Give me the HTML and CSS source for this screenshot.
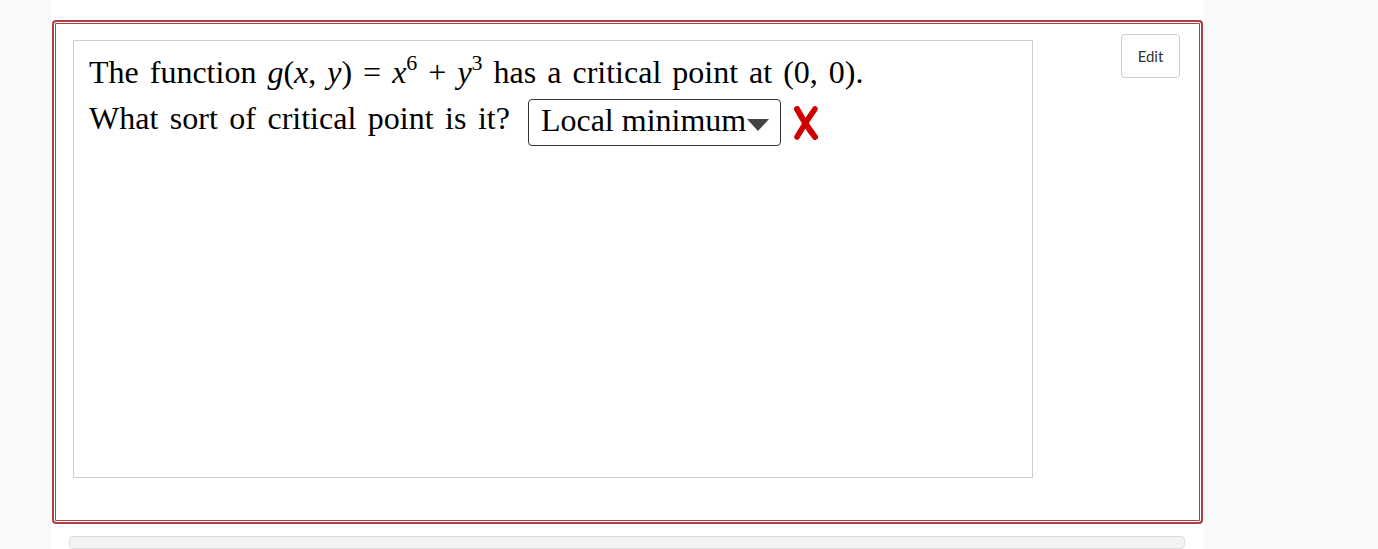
FILE: index.html
```html
<!DOCTYPE html>
<html>
<head>
<meta charset="utf-8">
<link rel="stylesheet" href="styles.css">
</head>
<body>
<div class="page">
  <div class="problem">
    <div class="content">
      <p class="line1">The function <span class="math"><i>g</i>(<i>x</i>, <i>y</i>) = <i>x</i><sup>6</sup> + <i>y</i><sup>3</sup></span> has a critical point at <span class="math">(0, 0)</span>.</p>
      <p class="line2"><span class="q">What sort of critical point is it?</span><span class="select"><span class="opt">Local minimum</span><svg class="caret" width="22" height="12" viewBox="0 0 22 12"><polygon points="0,0 22,0 11,12" fill="#444"/></svg></span><svg class="wrong" width="26" height="34" viewBox="0 0 26 34"><path d="M4 3 C9 12, 15 22, 22 31" stroke="#d00000" stroke-width="6" fill="none" stroke-linecap="round"/><path d="M22 3 C16 11, 10 21, 4 31" stroke="#d00000" stroke-width="5.5" fill="none" stroke-linecap="round"/></svg></p>
    </div>
    <button class="edit">Edit</button>
  </div>
  <div class="next"></div>
</div>
</body>
</html>
```
FILE: styles.css
```css
html, body {
  margin: 0;
  padding: 0;
  background: #f9f9f9;
}
.page {
  margin-left: 51px;
  width: 1153px;
  height: 549px;
  background: #fff;
  padding-top: 20px;
  box-sizing: border-box;
  overflow: hidden;
}
.problem {
  margin-left: 1px;
  width: 1151px;
  height: 504px;
  box-sizing: border-box;
  border: 2px solid #ad4040;
  border-radius: 4px;
  box-shadow: inset 0 0 0 1px #fff, inset 0 0 0 2px #ad4040;
  padding: 12px 21px 0 19px;
  display: flex;
  justify-content: space-between;
  align-items: flex-start;
}
.content {
  margin-top: 6px;
  width: 960px;
  height: 438px;
  box-sizing: border-box;
  border: 1px solid #cfcfcf;
  padding: 9px 15px;
  font-family: "Liberation Serif", "Times New Roman", serif;
  font-size: 32px;
  color: #000;
}
.content p {
  margin: 0;
}
.line1 {
  line-height: 44px;
  word-spacing: 3px;
}
.line2 {
  line-height: 36px;
  word-spacing: 3.5px;
  display: flex;
  align-items: flex-start;
}
.q {
  margin-top: 6px;
}
.math i {
  font-style: italic;
}
.math sup {
  font-size: 22px;
  line-height: 0;
  vertical-align: 13px;
}
.select {
  display: inline-flex;
  align-items: center;
  height: 47px;
  box-sizing: border-box;
  border: 1px solid #333;
  border-radius: 4px;
  padding: 0 11px 6px 12px;
  margin-top: 5px;
  margin-left: 18px;
  word-spacing: 0;
  font-family: "Liberation Serif", "Times New Roman", serif;
}
.opt {
  font-family: "Liberation Serif", "Times New Roman", serif;
}
.caret {
  margin-left: 1px;
  margin-top: 11px;
}
.wrong {
  margin-top: 12px;
  margin-left: 12px;
}
.edit {
  width: 59px;
  height: 44px;
  background: #fff;
  border: 1px solid #ccc;
  border-radius: 4px;
  font-family: Lato, "Open Sans", sans-serif;
  font-size: 15px;
  color: #333;
  padding: 0;
  cursor: pointer;
}
.next {
  margin: 12px 19px 0 18px;
  height: 11px;
  background: #f3f3f3;
  border: 1px solid #dcdcdc;
  border-radius: 4px;
}
```
